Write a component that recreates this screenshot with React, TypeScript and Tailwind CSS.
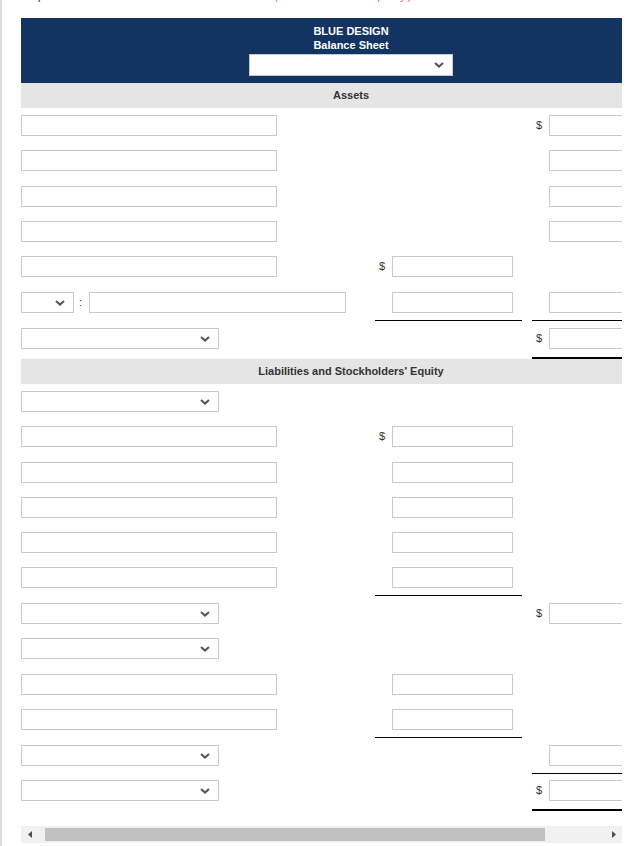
import React from "react";

type Left = "input" | "select" | "combo" | null;
type Cell = { dollar?: boolean; input?: boolean; line?: 0 | 1 | 2 };
type Row = { h: string; left: Left; mid?: Cell; right?: Cell };

const assets: Row[] = [
  { h: "h-[35px]", left: "input", right: { dollar: true, input: true } },
  { h: "h-[36px]", left: "input", right: { input: true } },
  { h: "h-[35px]", left: "input", right: { input: true } },
  { h: "h-[35px]", left: "input", right: { input: true } },
  { h: "h-[36px]", left: "input", mid: { dollar: true, input: true } },
  { h: "h-[36px]", left: "combo", mid: { input: true, line: 1 }, right: { input: true, line: 1 } },
  { h: "h-[31px]", left: "select", right: { dollar: true, input: true, line: 2 } },
];

const liabilities: Row[] = [
  { h: "h-[35px]", left: "select" },
  { h: "h-[36px]", left: "input", mid: { dollar: true, input: true } },
  { h: "h-[35px]", left: "input", mid: { input: true } },
  { h: "h-[35px]", left: "input", mid: { input: true } },
  { h: "h-[35px]", left: "input", mid: { input: true } },
  { h: "h-[36px]", left: "input", mid: { input: true, line: 1 } },
  { h: "h-[35px]", left: "select", right: { dollar: true, input: true } },
  { h: "h-[36px]", left: "select" },
  { h: "h-[35px]", left: "input", mid: { input: true } },
  { h: "h-[36px]", left: "input", mid: { input: true, line: 1 } },
  { h: "h-[35px]", left: "select", right: { input: true, line: 1 } },
  { h: "h-[46px]", left: "select", right: { dollar: true, input: true, line: 2 } },
];

function Chevron() {
  return (
    <svg width="10" height="6" viewBox="0 0 10 6" fill="none">
      <path d="M1 1l4 3.6L9 1" stroke="#555" strokeWidth="2" />
    </svg>
  );
}

function SelectBox({ className }: { className: string }) {
  return (
    <div className={`${className} h-[21px] border border-[#c9c9c9] bg-white flex items-center justify-end pr-[8px]`}>
      <Chevron />
    </div>
  );
}

function TextBox({ className }: { className: string }) {
  return <input type="text" className={`${className} h-[21px] border border-[#c9c9c9] bg-white outline-none`} />;
}

function Amount({ cell, width }: { cell?: Cell; width: string }) {
  return (
    <div className={`${width} flex flex-col`}>
      <div className="flex h-[21px] items-center">
        <span className="w-[17px] pl-[4px] text-[11px] text-[#333]">{cell?.dollar ? "$" : ""}</span>
        {cell?.input && <TextBox className="w-[121px]" />}
      </div>
      {cell?.line === 1 && <div className="mt-[7px] border-t border-black" />}
      {cell?.line === 2 && <div className="mt-[8px] border-t-2 border-black" />}
    </div>
  );
}

function LineRow({ row }: { row: Row }) {
  return (
    <div className={`${row.h} flex items-start`}>
      <div className="w-[354px] flex items-center">
        {row.left === "input" && <TextBox className="w-[256px]" />}
        {row.left === "select" && <SelectBox className="w-[198px]" />}
        {row.left === "combo" && (
          <>
            <SelectBox className="w-[53px]" />
            <span className="w-[15px] pl-[5px] text-[11px] text-[#333]">:</span>
            <TextBox className="w-[257px]" />
          </>
        )}
      </div>
      <Amount cell={row.mid} width="w-[147px]" />
      <div className="w-[10px]" />
      <Amount cell={row.right} width="w-[149px]" />
    </div>
  );
}

function SectionBar({ title }: { title: string }) {
  return (
    <div className="h-[25px] bg-[#e5e5e5] flex items-center justify-center text-[11px] font-bold text-[#333]">
      {title}
    </div>
  );
}

function Scrollbar() {
  return (
    <div className="w-[601px] h-[17px] bg-[#f1f1f1] flex items-center">
      <div className="w-[17px] flex justify-center">
        <svg width="4" height="7" viewBox="0 0 4 7">
          <path d="M4 0L0 3.5L4 7z" fill="#505050" />
        </svg>
      </div>
      <div className="ml-[7px] w-[500px] h-[13px] bg-[#c1c1c1]" />
      <div className="flex-1" />
      <div className="w-[17px] flex justify-center">
        <svg width="4" height="7" viewBox="0 0 4 7">
          <path d="M0 0L4 3.5L0 7z" fill="#505050" />
        </svg>
      </div>
    </div>
  );
}

export default function App() {
  return (
    <div className="h-[846px] border-l-2 border-[#dedede] bg-white pl-[19px] font-['Liberation_Sans',Arial,sans-serif]">
      {/* instruction line, scrolled mostly out of view */}
      <div className="h-[3px] overflow-hidden">
        <div className="-mt-[11px] flex text-[11px] leading-[14px] whitespace-nowrap">
          <span className="text-[#333]">Prepare a balance sheet</span>
          <span className="ml-[134px] italic text-[#e06a5a]">(List in the order of liquidity.)</span>
        </div>
      </div>

      <div className="mt-[15px] w-[601px] overflow-hidden">
        <div className="w-[660px]">
          {/* HEADER */}
          <div className="h-[65px] bg-[#133361] pt-[6px] flex flex-col items-center text-[11px] font-bold leading-[14px] text-white">
            <div>BLUE DESIGN</div>
            <div>Balance Sheet</div>
            <SelectBox className="mt-[2px] w-[204px] !h-[22px]" />
          </div>

          <SectionBar title="Assets" />
          <div className="pt-[7px]">
            {assets.map((r, i) => (
              <LineRow key={i} row={r} />
            ))}
          </div>

          <SectionBar title="Liabilities and Stockholders' Equity" />
          <div className="pt-[7px]">
            {liabilities.map((r, i) => (
              <LineRow key={i} row={r} />
            ))}
          </div>
        </div>
      </div>

      <Scrollbar />
    </div>
  );
}
